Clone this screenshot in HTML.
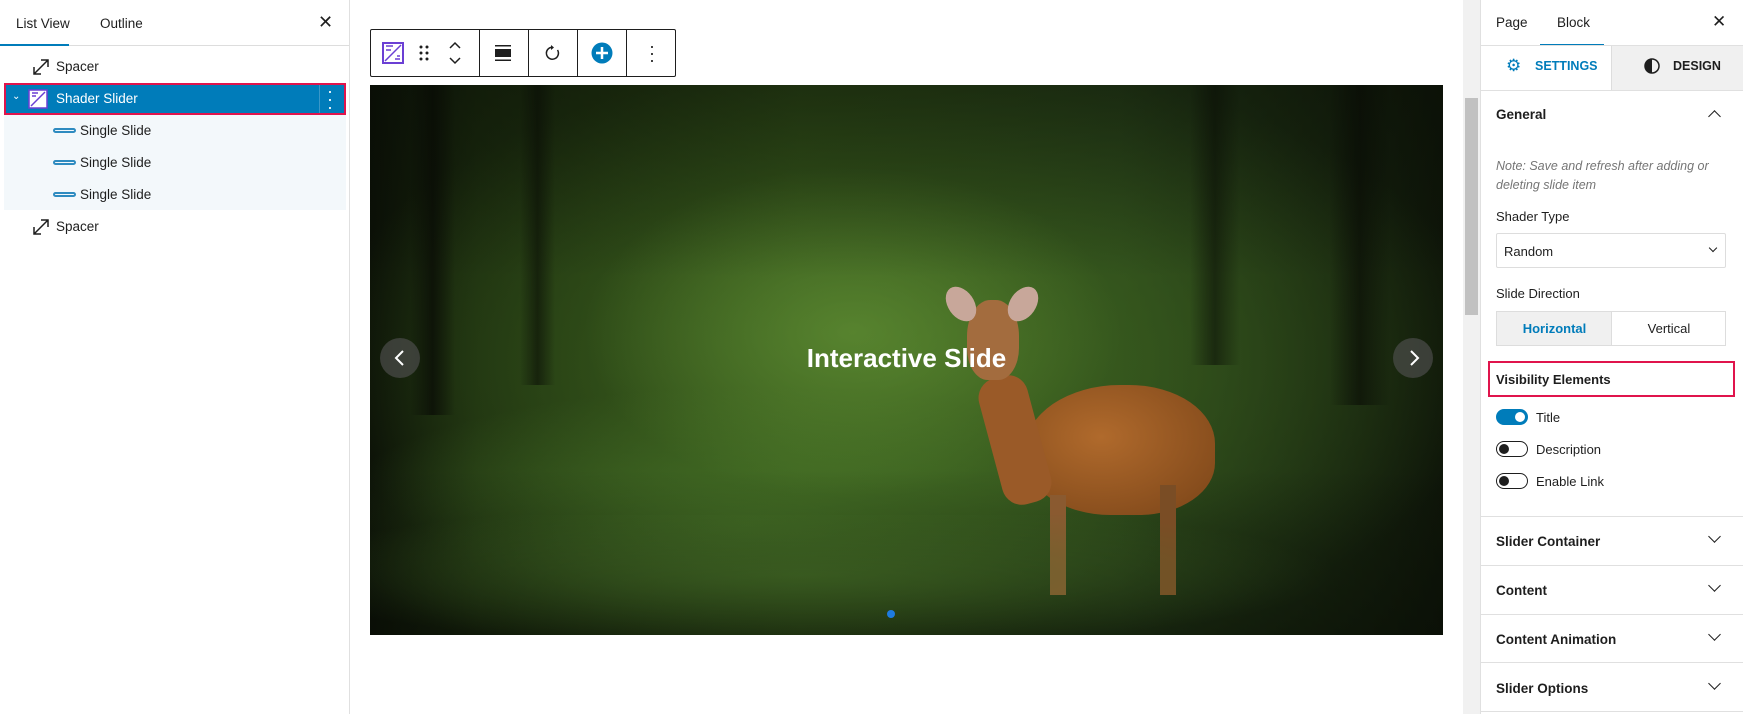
<!DOCTYPE html>
<html><head><meta charset="utf-8"><style>
*{box-sizing:border-box;margin:0;padding:0}
body{width:1743px;height:714px;overflow:hidden;background:#fff;font-family:"Liberation Sans",sans-serif;color:#1e1e1e;position:relative}
.a{position:absolute}
.t{font-size:13.5px}
.rp{font-size:13px}
.hd{font-weight:bold;font-size:13.5px;color:#1e1e1e}
.chev{position:absolute;right:24px;width:9px;height:9px;border-right:1.8px solid #1e1e1e;border-bottom:1.8px solid #1e1e1e;transform:rotate(45deg)}
.div{position:absolute;left:1481px;right:0;height:1px;background:#e0e0e0}
.tog{position:absolute;left:1496px;width:32px;height:16px;border-radius:8px;border:1px solid #1e1e1e;background:#fff}
.tog::after{content:"";position:absolute;left:2px;top:2px;width:10px;height:10px;border-radius:50%;background:#1e1e1e}
.tog.on{background:#007cba;border-color:#007cba}
.tog.on::after{left:auto;right:2px;background:#fff}
.ss{position:absolute;left:53px;width:23px;height:5px;border:2px solid #2e8bc0;border-radius:3px}
</style></head><body>
<!-- left panel -->
<div class="a" style="left:349px;top:0;width:1px;height:714px;background:#e0e0e0"></div>
<div class="a t" style="left:16px;top:16px">List View</div>
<div class="a t" style="left:100px;top:16px">Outline</div>
<div class="a" style="left:318px;top:12px;font-size:18px">✕</div>
<div class="a" style="left:0;top:45px;width:349px;height:1px;background:#ddd"></div>
<div class="a" style="left:0;top:44px;width:69px;height:2px;background:#007cba"></div>
<svg class="a" style="left:31px;top:57px" width="20" height="20" viewBox="0 0 20 20"><path d="M3 17L17 3M10 3h7v7M3 10v7h7" fill="none" stroke="#1e1e1e" stroke-width="1.5"/></svg>
<div class="a t" style="left:56px;top:59px">Spacer</div>
<div class="a" style="left:4px;top:115px;width:342px;height:95px;background:#f3f8fb"></div>
<div class="a" style="left:4px;top:83px;width:342px;height:32px;background:#007cba;border:2px solid #e0144c"></div>
<div class="a" style="left:319px;top:85px;width:1px;height:28px;background:#3a97c8"></div>
<div class="a" style="left:12px;top:91px;color:#fff;font-size:10px">⌄</div>
<svg class="a" style="left:28px;top:89px" width="20" height="20"><rect x="1" y="1" width="18" height="18" fill="#fff" stroke="#6b3fd4" stroke-width="1.5"/><path d="M3 17L17 3M4 4h6M4 7h4" stroke="#6b3fd4" stroke-width="1.5"/></svg>
<div class="a t" style="left:56px;top:91px;color:#fff">Shader Slider</div>
<div class="a" style="left:327px;top:87px;color:#fff;font-size:18px;line-height:8px;width:4px">·<br>·<br>·</div>
<div class="ss" style="top:128px"></div>
<div class="a t" style="left:80px;top:123px">Single Slide</div>
<div class="ss" style="top:160px"></div>
<div class="a t" style="left:80px;top:155px">Single Slide</div>
<div class="ss" style="top:192px"></div>
<div class="a t" style="left:80px;top:187px">Single Slide</div>
<svg class="a" style="left:31px;top:217px" width="20" height="20" viewBox="0 0 20 20"><path d="M3 17L17 3M10 3h7v7M3 10v7h7" fill="none" stroke="#1e1e1e" stroke-width="1.5"/></svg>
<div class="a t" style="left:56px;top:219px">Spacer</div>
<!-- toolbar -->
<div class="a" style="left:370px;top:29px;width:306px;height:48px;border:1px solid #1e1e1e;border-radius:2px;background:#fff"></div>
<div class="a" style="left:479px;top:29px;width:1px;height:48px;background:#1e1e1e"></div>
<div class="a" style="left:528px;top:29px;width:1px;height:48px;background:#1e1e1e"></div>
<div class="a" style="left:577px;top:29px;width:1px;height:48px;background:#1e1e1e"></div>
<div class="a" style="left:626px;top:29px;width:1px;height:48px;background:#1e1e1e"></div>
<svg class="a" style="left:382px;top:42px" width="22" height="22"><rect x="1" y="1" width="20" height="20" fill="#fff" stroke="#6b3fd4" stroke-width="2"/><path d="M3 19L19 3M4 4h7M4 8h5M13 17h5M15 14h3" stroke="#6b3fd4" stroke-width="1.5"/></svg>
<svg class="a" style="left:418px;top:44px" width="12" height="18"><g fill="#1e1e1e"><circle cx="3" cy="3" r="1.5"/><circle cx="9" cy="3" r="1.5"/><circle cx="3" cy="9" r="1.5"/><circle cx="9" cy="9" r="1.5"/><circle cx="3" cy="15" r="1.5"/><circle cx="9" cy="15" r="1.5"/></g></svg>
<svg class="a" style="left:447px;top:40px" width="16" height="26"><path d="M3 8l5-5 5 5M3 18l5 5 5-5" fill="none" stroke="#1e1e1e" stroke-width="1.5"/></svg>
<svg class="a" style="left:495px;top:45px" width="16" height="16"><rect x="0" y="0" width="16" height="1.5" fill="#1e1e1e"/><rect x="0" y="4" width="16" height="8" fill="#1e1e1e"/><rect x="0" y="14.5" width="16" height="1.5" fill="#1e1e1e"/></svg>
<svg class="a" style="left:545px;top:45px" width="16" height="16"><path d="M12.5 5A6 6 0 1 1 7 2.2" fill="none" stroke="#1e1e1e" stroke-width="1.5"/><path d="M6 0l3 2.5-3 2.5z" fill="#1e1e1e"/></svg>
<svg class="a" style="left:591px;top:42px" width="22" height="22"><circle cx="11" cy="11" r="10.5" fill="#007cba"/><path d="M11 5v12M5 11h12" stroke="#fff" stroke-width="2.5"/></svg>
<div class="a" style="left:649px;top:43px;font-size:18px;line-height:7px;width:4px">·<br>·<br>·</div>
<!-- image -->
<div class="a" style="left:370px;top:85px;width:1073px;height:550px;overflow:hidden;background:
radial-gradient(ellipse 25% 30% at 45% 45%,rgba(110,160,60,.55),transparent),
radial-gradient(ellipse 40% 25% at 35% 80%,rgba(80,130,45,.6),transparent),
radial-gradient(ellipse 55% 55% at 50% 50%,#3d631f,transparent),
linear-gradient(90deg,#0b1007 0%,#1a2a0e 10%,#2e4b17 40%,#28421a 70%,#0e1509 100%)">
<div class="a" style="left:40px;top:0;width:45px;height:330px;background:linear-gradient(90deg,transparent,rgba(8,10,5,.7),transparent)"></div>
<div class="a" style="left:150px;top:0;width:35px;height:300px;background:linear-gradient(90deg,transparent,rgba(10,14,6,.6),transparent)"></div>
<div class="a" style="left:820px;top:0;width:50px;height:280px;background:linear-gradient(90deg,transparent,rgba(10,14,6,.55),transparent)"></div>
<div class="a" style="left:960px;top:0;width:60px;height:320px;background:linear-gradient(90deg,transparent,rgba(8,10,5,.6),transparent)"></div>
<div class="a" style="left:0;top:0;width:100%;height:100%;background:linear-gradient(180deg,rgba(8,12,5,.45),transparent 35%,transparent 70%,rgba(8,12,5,.55))"></div>
<div class="a" style="left:655px;top:300px;width:190px;height:130px;border-radius:50% 45% 40% 45%;background:radial-gradient(ellipse at 40% 40%,#b06a2c,#7a4418)"></div>
<div class="a" style="left:620px;top:290px;width:50px;height:130px;background:#9a5a28;border-radius:20px;transform:rotate(-15deg)"></div>
<div class="a" style="left:597px;top:215px;width:52px;height:80px;border-radius:45% 45% 40% 40%;background:#a36c3e"></div>
<div class="a" style="left:578px;top:200px;width:26px;height:38px;border-radius:50%;background:#c8a79a;transform:rotate(-35deg)"></div>
<div class="a" style="left:640px;top:200px;width:26px;height:38px;border-radius:50%;background:#c8a79a;transform:rotate(35deg)"></div>
<div class="a" style="left:680px;top:410px;width:16px;height:100px;background:#8a5a30"></div>
<div class="a" style="left:790px;top:400px;width:16px;height:110px;background:#7a4d25"></div>
<div class="a" style="left:0;top:430px;width:100%;height:120px;background:radial-gradient(ellipse 50% 60% at 40% 50%,rgba(70,110,40,.5),transparent)"></div>
</div>
<div class="a" style="left:370px;top:343px;width:1073px;text-align:center;color:#fff;font-weight:bold;font-size:26px">Interactive Slide</div>
<div class="a" style="left:380px;top:338px;width:40px;height:40px;border-radius:50%;background:rgba(80,80,80,.65)"></div>
<svg class="a" style="left:393px;top:349px" width="14" height="18"><path d="M10 2L3 9l7 7" fill="none" stroke="#fff" stroke-width="2"/></svg>
<div class="a" style="left:1393px;top:338px;width:40px;height:40px;border-radius:50%;background:rgba(80,80,80,.65)"></div>
<svg class="a" style="left:1407px;top:349px" width="14" height="18"><path d="M4 2l7 7-7 7" fill="none" stroke="#fff" stroke-width="2"/></svg>
<div class="a" style="left:887px;top:610px;width:8px;height:8px;border-radius:50%;background:#1e7be0"></div>
<!-- scrollbar -->
<div class="a" style="left:1463px;top:0;width:17px;height:714px;background:#f1f1f1"></div>
<div class="a" style="left:1465px;top:98px;width:13px;height:217px;background:#c1c1c1"></div>
<div class="a" style="left:1480px;top:0;width:1px;height:714px;background:#e0e0e0"></div>
<!-- right panel -->
<div class="a rp" style="left:1496px;top:15px;font-size:13.5px">Page</div>
<div class="a rp" style="left:1557px;top:15px;font-size:13.5px">Block</div>
<div class="a" style="left:1540px;top:44px;width:64px;height:2px;background:#007cba"></div>
<div class="a" style="left:1712px;top:12px;font-size:17px">✕</div>
<div class="div" style="top:45px"></div>
<div class="a" style="left:1611px;top:46px;width:132px;height:44px;background:#f0f0f0;border-left:1px solid #ddd"></div>
<div class="a" style="left:1506px;top:56px;color:#007cba;font-size:17px">⚙</div>
<div class="a" style="left:1535px;top:59px;color:#007cba;font-size:12.5px;font-weight:bold">SETTINGS</div>
<svg class="a" style="left:1644px;top:58px" width="16" height="16"><circle cx="8" cy="8" r="7" fill="none" stroke="#1e1e1e" stroke-width="1.5"/><path d="M8 1a7 7 0 0 0 0 14z" fill="#1e1e1e"/></svg>
<div class="a" style="left:1673px;top:59px;font-size:12.5px;font-weight:bold">DESIGN</div>
<div class="div" style="top:90px"></div>
<div class="a hd" style="left:1496px;top:107px">General</div>
<div class="chev" style="top:112px;transform:rotate(-135deg)"></div>
<div class="a" style="left:1496px;top:157px;font-size:12.5px;font-style:italic;color:#757575;line-height:19px">Note: Save and refresh after adding or<br>deleting slide item</div>
<div class="a rp" style="left:1496px;top:209px">Shader Type</div>
<div class="a" style="left:1496px;top:233px;width:230px;height:35px;border:1px solid #ddd;border-radius:2px"></div>
<div class="a rp" style="left:1504px;top:244px">Random</div>
<div class="a" style="left:1710px;top:245px;width:6px;height:6px;border-right:1.3px solid #1e1e1e;border-bottom:1.3px solid #1e1e1e;transform:rotate(45deg)"></div>
<div class="a rp" style="left:1496px;top:286px">Slide Direction</div>
<div class="a" style="left:1496px;top:311px;width:230px;height:35px;border:1px solid #ddd"></div>
<div class="a" style="left:1497px;top:312px;width:115px;height:33px;background:#f0f0f0;border-right:1px solid #ddd"></div>
<div class="a" style="left:1497px;top:321px;width:115px;text-align:center;color:#007cba;font-weight:bold;font-size:13px">Horizontal</div>
<div class="a rp" style="left:1612px;top:321px;width:114px;text-align:center">Vertical</div>
<div class="a" style="left:1488px;top:361px;width:247px;height:36px;border:2px solid #e0144c"></div>
<div class="a hd" style="left:1496px;top:372px;font-size:13px">Visibility Elements</div>
<div class="tog on" style="top:409px"></div><div class="a rp" style="left:1536px;top:410px">Title</div>
<div class="tog" style="top:441px"></div><div class="a rp" style="left:1536px;top:442px">Description</div>
<div class="tog" style="top:473px"></div><div class="a rp" style="left:1536px;top:474px">Enable Link</div>
<div class="div" style="top:516px"></div>
<div class="a hd" style="left:1496px;top:534px">Slider Container</div><div class="chev" style="top:532px"></div>
<div class="div" style="top:565px"></div>
<div class="a hd" style="left:1496px;top:583px">Content</div><div class="chev" style="top:581px"></div>
<div class="div" style="top:614px"></div>
<div class="a hd" style="left:1496px;top:632px">Content Animation</div><div class="chev" style="top:630px"></div>
<div class="div" style="top:662px"></div>
<div class="a hd" style="left:1496px;top:681px">Slider Options</div><div class="chev" style="top:679px"></div>
<div class="div" style="top:711px"></div>
</body></html>
